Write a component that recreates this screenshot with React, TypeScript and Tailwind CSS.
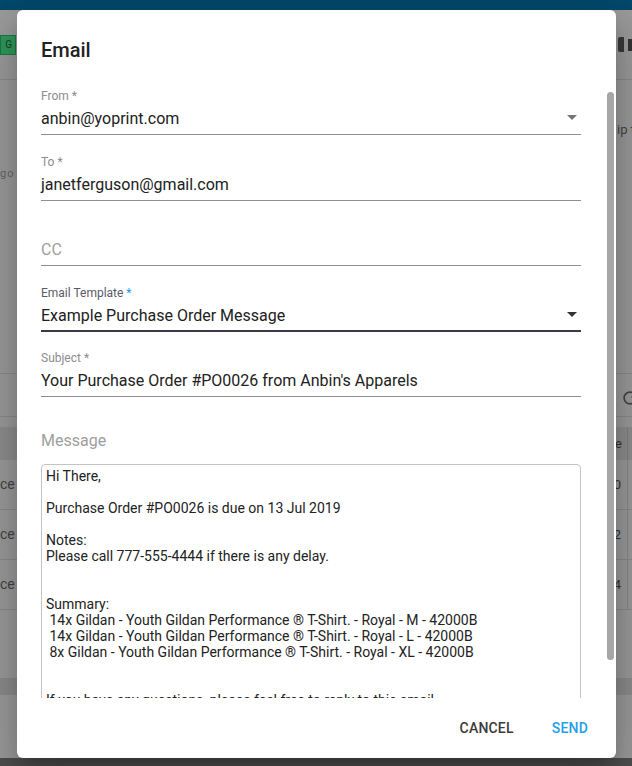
import React from "react";

function Arrow({ dark }: { dark?: boolean }) {
  return (
    <svg width="24" height="24" viewBox="0 0 24 24" className="absolute right-[-3px] top-[-3px]">
      <path d="M7 10l5 5 5-5z" fill={dark ? "#333333" : "#757575"} />
    </svg>
  );
}

function Field({
  label,
  value,
  placeholder,
  select,
  focused,
}: {
  label?: string;
  value?: string;
  placeholder?: string;
  select?: boolean;
  focused?: boolean;
}) {
  return (
    <div className="mb-[19.5px]">
      <div className={"h-[14px] text-[12px] leading-[14px] " + (focused ? "text-[#5a5a66]" : "text-[#8c8c8c]")}>
        {label}
        {label && <span className={focused ? "text-[#2196f3]" : ""}> *</span>}
      </div>
      <div
        className={
          "relative mt-[5px] " +
          (focused ? "border-b-2 border-[#3b3b48] pb-[6px]" : "border-b border-[#8f8f8f] pb-[7px]")
        }
      >
        <div
          className={
            "h-[19px] pt-[1px] text-[16px] leading-[19px] " + (placeholder ? "text-[#9e9e9e]" : "text-[#212121]")
          }
        >
          {value ?? placeholder}
        </div>
        {select && <Arrow dark={focused} />}
      </div>
    </div>
  );
}

const message = `Hi There,

Purchase Order #PO0026 is due on 13 Jul 2019

Notes:
Please call 777-555-4444 if there is any delay.


Summary:
 14x Gildan - Youth Gildan Performance ® T-Shirt. - Royal - M - 42000B
 14x Gildan - Youth Gildan Performance ® T-Shirt. - Royal - L - 42000B
 8x Gildan - Youth Gildan Performance ® T-Shirt. - Royal - XL - 42000B


If you have any questions, please feel free to reply to this email.
`;

export default function App() {
  return (
    <div
      className="relative h-[766px] w-[632px] overflow-hidden bg-[#9b9b9b]"
      style={{ fontFamily: "Roboto, 'Liberation Sans', sans-serif" }}
    >
      {/* background page (dimmed) */}
      <div className="flex h-full flex-col text-[#4a4a4a]">
        <div className="h-[10px] bg-[#03496b]" />
        <div className="flex h-[70px] items-center justify-between border-b border-[#8a8a8a]">
          <div className="flex h-[20px] w-[16px] items-center justify-end border border-[#1d7a45] bg-[#2e9a5a] pr-[3px] text-[10px] text-[#1f3b2b]">
            G
          </div>
          <div className="flex items-center gap-[4px]">
            <div className="h-[15px] w-[6px] rounded-l-[2px] bg-[#3a3a3a]" />
            <div className="h-[12px] w-[4px] bg-[#333]" />
          </div>
        </div>
        <div className="flex h-[294px] justify-between border-b border-[#8a8a8a]">
          <div className="mt-[86px] text-[11px] tracking-[1px] text-[#666]">go</div>
          <div className="mr-[-3px] mt-[40px] w-[18px] whitespace-nowrap text-[13px] text-[#444]">ip t</div>
        </div>
        <div className="flex h-[43px] items-center justify-end border-b border-[#8a8a8a]">
          <svg width="20" height="20" viewBox="0 0 24 24" className="mr-[-8px] mt-[6px]">
            <path
              d="M17.65 6.35C16.2 4.9 14.21 4 12 4c-4.42 0-7.99 3.58-7.99 8s3.57 8 7.99 8c3.73 0 6.84-2.55 7.73-6h-2.08c-.82 2.33-3.04 4-5.65 4-3.31 0-6-2.69-6-6s2.69-6 6-6c1.66 0 3.14.69 4.22 1.78L13 11h7V4l-2.35 2.35z"
              fill="#444"
            />
          </svg>
        </div>
        <div className="h-[10px]" />
        <div className="flex h-[33px] items-center justify-end bg-[#8e8e8e]">
          <span className="mr-[5px] text-[13px] text-[#333]">e</span>
          <div className="h-full w-[1px] bg-[#7e7e7e]" />
          <div className="w-[4px]" />
        </div>
        {["0", "2", "4"].map((n) => (
          <div key={n} className="flex h-[50px] items-center justify-between border-b border-[#8a8a8a]">
            <span className="text-[14px] text-[#444]">ce</span>
            <div className="flex h-full items-center">
              <span className="mr-[6px] text-[13px] text-[#333]">{n}</span>
              <div className="h-full w-[1px] bg-[#858585]" />
              <div className="w-[4px]" />
            </div>
          </div>
        ))}
        <div className="h-[68px]" />
        <div className="h-[17px] bg-[#8c8c8c]" />
        <div className="flex-1" />
        <div className="h-[8px] bg-[#4f4f4f]" />
      </div>

      {/* dialog */}
      <div className="absolute left-[17px] top-[10px] flex h-[748px] w-[599px] flex-col rounded-[6px] bg-white shadow-[0_11px_15px_-7px_rgba(0,0,0,0.2),0_24px_38px_3px_rgba(0,0,0,0.14),0_9px_46px_8px_rgba(0,0,0,0.12)]">
        <div className="px-6 pb-2 pt-6 text-[20px] font-medium leading-8 text-[#222]">Email</div>
        <div className="relative flex-1 overflow-hidden">
          <div className="pl-6 pr-[35px] pt-[15px]">
            <Field label="From" value="anbin@yoprint.com" select />
            <Field label="To" value="janetferguson@gmail.com" />
            <Field placeholder="CC" />
            <Field label="Email Template" value="Example Purchase Order Message" select focused />
            <Field label="Subject" value="Your Purchase Order #PO0026 from Anbin's Apparels" />
            <div className="mt-[33.5px] h-[19px] text-[16px] leading-[19px] text-[#9e9e9e]">Message</div>
            <div className="mt-[14.5px] h-[320px] rounded-[4px] border border-[#c4c4c4] px-[4px] pt-[3px]">
              <div className="whitespace-pre text-[14px] leading-4 text-[#222]">{message}</div>
            </div>
          </div>
          <div className="absolute right-[2px] top-[18px] h-[568px] w-[7px] rounded-full bg-[#a6a6a6]" />
        </div>
        <div className="flex justify-end gap-[6px] p-3">
          <button className="h-9 min-w-[64px] rounded px-4 text-[14px] font-medium uppercase tracking-[0.2px] text-[#3a3a3a]">
            Cancel
          </button>
          <button className="h-9 min-w-[64px] rounded px-4 text-[14px] font-medium uppercase tracking-[0.2px] text-[#1ea0ea]">
            Send
          </button>
        </div>
      </div>
    </div>
  );
}
